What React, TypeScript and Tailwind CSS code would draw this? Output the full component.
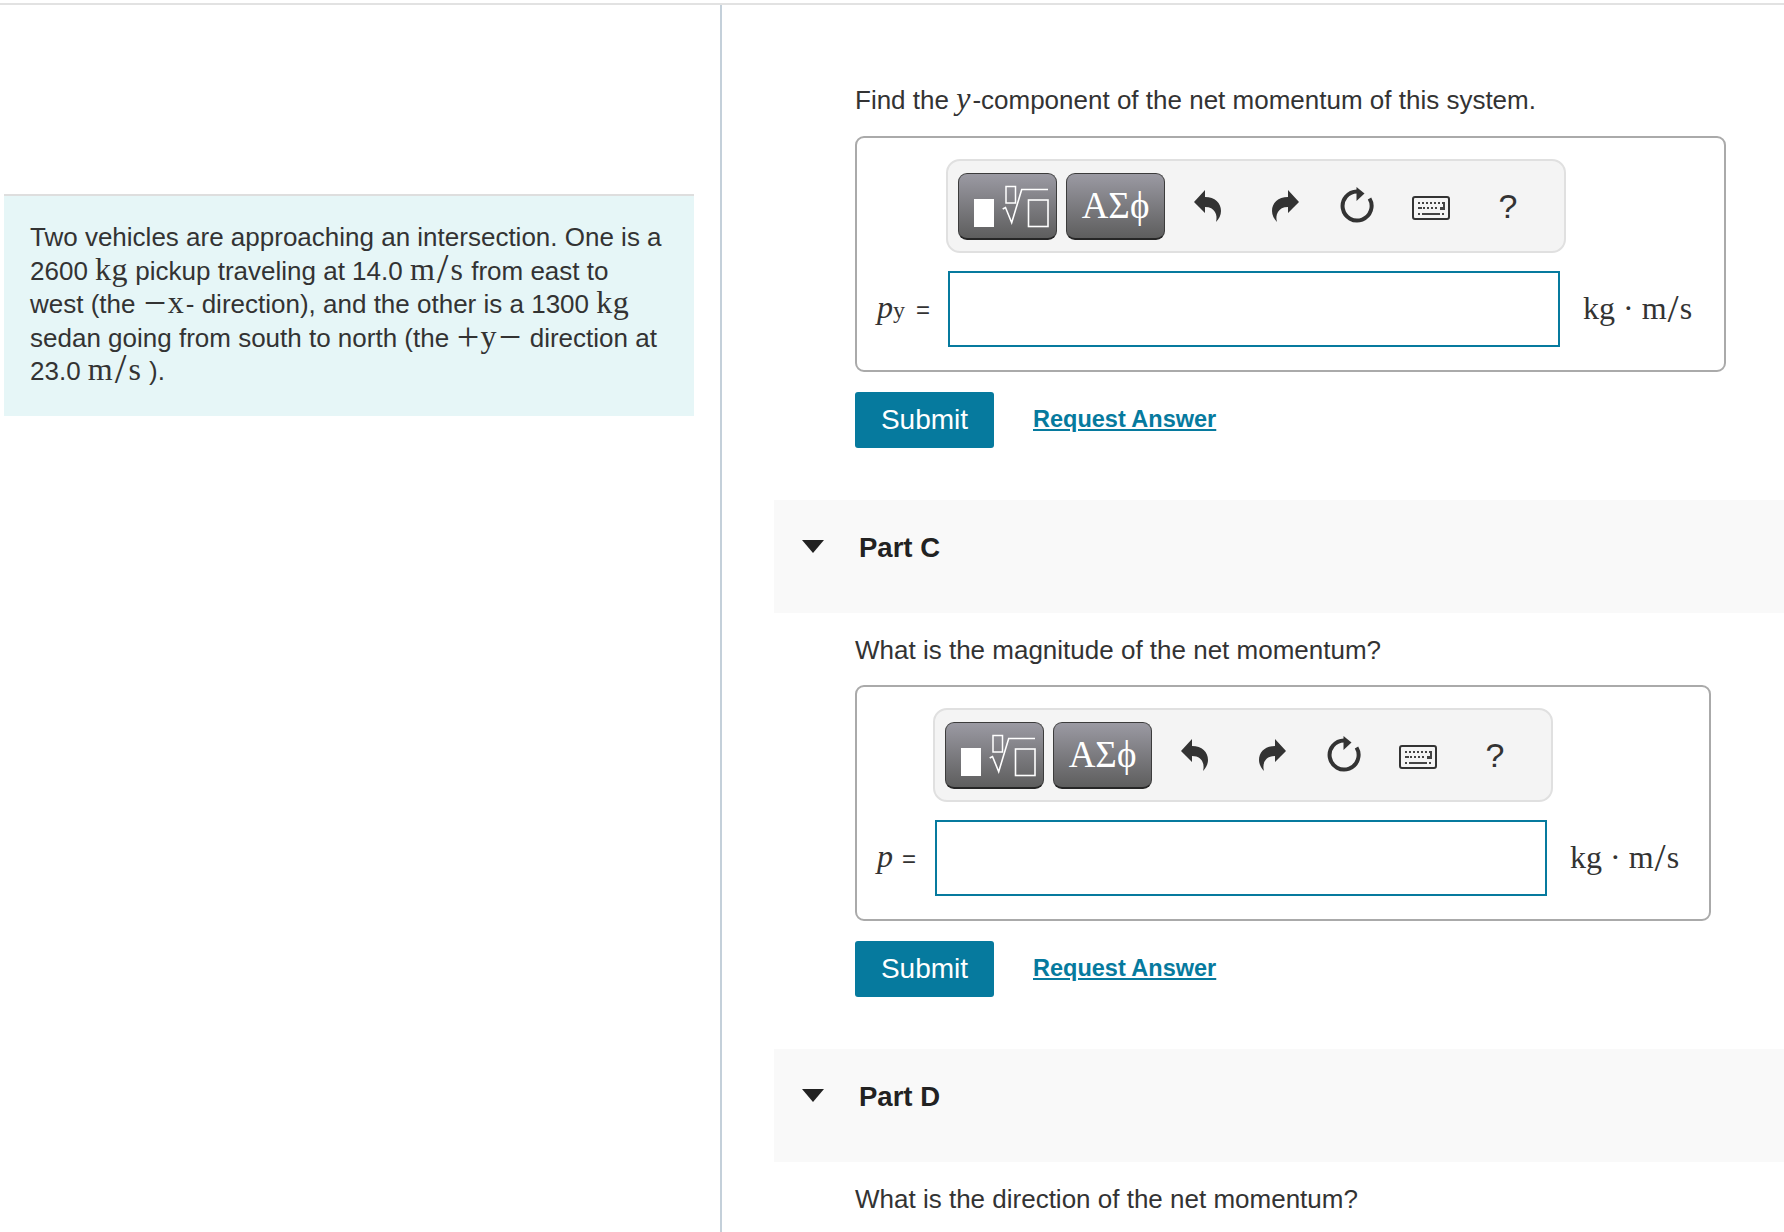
const serif = "font-['Liberation_Serif',serif]";

function Undo({ flip }: { flip?: boolean }) {
  return (
    <svg width="27" height="32" viewBox="0 0 27 32" className={flip ? "-scale-x-100" : ""}>
      <path d="M0 12 L11 0 V7 C21 7 27 13 27 21 C27 25 25 29 22 32 C24 25 21 17 11 17 V23 Z" fill="#333" />
    </svg>
  );
}

function Refresh() {
  return (
    <svg width="34" height="46" viewBox="0 0 34 46">
      <path d="M29.5 15.5 A14.5 14.5 0 1 1 17 8.5" fill="none" stroke="#333" strokeWidth="4" />
      <path d="M16.5 4 L24.5 10.5 L16.5 18 Z" fill="#333" />
    </svg>
  );
}

function Keyboard() {
  const top = [6, 10, 14, 18, 22, 26, 30];
  const mid = [6, 11, 15, 19, 23];
  return (
    <svg width="38" height="24" viewBox="0 0 38 24">
      <rect x="1" y="1" width="36" height="22" rx="2" fill="none" stroke="#333" strokeWidth="2" />
      {top.map((x) => (
        <rect key={x} x={x} y="6" width="2" height="2" fill="#444" />
      ))}
      {mid.map((x) => (
        <rect key={x} x={x} y="11" width={x === 6 ? 4 : 2} height="2" fill="#444" />
      ))}
      <path d="M28 11 H32 V14 H28 Z M31 6 H33 V14 H31 Z" fill="#444" />
      <rect x="6" y="17" width="2" height="2" fill="#444" />
      <rect x="10" y="17" width="18" height="2" fill="#444" />
      <rect x="30" y="17" width="2" height="2" fill="#444" />
    </svg>
  );
}

function TemplateIcon() {
  return (
    <svg width="99" height="67" viewBox="0 0 99 67" className="absolute left-[-1px] top-[-1px]">
      <rect x="16" y="26" width="20" height="28" fill="#fff" />
      <rect x="48" y="13.5" width="9.5" height="16.5" fill="none" stroke="#fff" strokeWidth="1.5" />
      <path d="M44.7 36 L47.5 34.5 L53.7 49.7 L63.7 16.5 H90" fill="none" stroke="#fff" strokeWidth="1.6" />
      <rect x="70.5" y="27" width="19.5" height="26.5" fill="none" stroke="#fff" strokeWidth="1.6" />
    </svg>
  );
}

const btn =
  "relative h-[67px] w-[99px] rounded-[9px] border border-[#3c3c3c] border-b-2 border-b-[#262626] bg-gradient-to-b from-[#9b9aa3] to-[#5e5e5e]";

function Toolbar({ offset }: { offset: string }) {
  return (
    <div className={`flex h-[94px] w-[620px] items-center rounded-[14px] border-2 border-[#e0e0e0] bg-[#f4f4f4] pl-[10px] ${offset}`}>
      <div className={btn}>
        <TemplateIcon />
      </div>
      <div className={`${btn} ml-[9px] flex items-center justify-center text-[37px] leading-none text-white ${serif}`}>ΑΣϕ</div>
      <div className="ml-[3px] flex w-[78px] justify-center"><Undo /></div>
      <div className="flex w-[78px] justify-center"><Undo flip /></div>
      <div className="flex w-[66px] justify-center"><Refresh /></div>
      <div className="flex w-[82px] justify-center pt-1"><Keyboard /></div>
      <div className="ml-[2px] flex w-[68px] justify-center text-[34px] leading-none text-[#333]">?</div>
    </div>
  );
}

function Slash({ size }: { size: string }) {
  return <span className={`mx-[1px] inline-block translate-y-[3px] font-light leading-[0] ${size}`}>/</span>;
}

function AnswerBox({ width, toolbar, labelW, label }: { width: string; toolbar: string; labelW: string; label: React.ReactNode }) {
  return (
    <div className={`h-[236px] rounded-[9px] border-2 border-[#aaaaaa] pt-[21px] ${width}`}>
      <Toolbar offset={toolbar} />
      <div className="mt-[18px] flex items-center">
        <div className={`mb-[5px] flex items-baseline pl-[20px] text-[#333] ${labelW}`}>{label}</div>
        <div className="h-[76px] w-[612px] border-2 border-[#067a9e] bg-white" />
        <div className={`mb-[3px] ml-[23px] text-[32px] leading-none text-[#333] ${serif}`}>
          kg · m<Slash size="text-[40px]" />s
        </div>
      </div>
    </div>
  );
}

function Actions() {
  return (
    <div className="flex items-center">
      <button className="h-[56px] w-[139px] rounded-[3px] bg-[#067a9e] text-[28px] text-white">Submit</button>
      <a className="ml-[39px] text-[23.5px] font-bold text-[#067a9e] underline">Request Answer</a>
    </div>
  );
}

function PartBand({ name }: { name: string }) {
  return (
    <div className="ml-[52px] flex h-[113px] items-start bg-[#f9f9f9] pt-[32px]">
      <svg width="22" height="13" viewBox="0 0 22 13" className="ml-[28px] mt-[8px]">
        <path d="M0 0 H22 L11 13 Z" fill="#222" />
      </svg>
      <div className="ml-[35px] text-[27.5px] font-bold leading-[32px] text-[#222]">{name}</div>
    </div>
  );
}

function M({ children }: { children: React.ReactNode }) {
  return <span className={`text-[32px] leading-[0] tracking-[0.5px] ${serif}`}>{children}</span>;
}

function MS() {
  return (
    <span className={`text-[32px] leading-[0] tracking-[1px] ${serif}`}>
      m<Slash size="text-[42px]" />s
    </span>
  );
}

function Line({ children }: { children: React.ReactNode }) {
  return <div className="h-[33.5px] whitespace-nowrap">{children}</div>;
}

function Sym({ children }: { children: React.ReactNode }) {
  return <span className="mx-[3px] inline-block scale-125 tracking-[0px]">{children}</span>;
}

export default function App() {
  return (
    <div className="h-[1232px] overflow-hidden bg-white font-['Liberation_Sans',sans-serif] text-[#333]">
      <div className="mt-[3px] h-[2px] bg-[#e2e2e2]" />
      <div className="flex h-[1227px]">
        <div className="w-[722px] shrink-0 border-r-2 border-[#c4d0da] pl-[4px] pr-[26px] pt-[189px]">
          <div className="h-[222px] border-t-2 border-[#dedede] bg-[#e6f6f7] pl-[26px] pt-[25px] text-[26px] leading-[33.5px]">
            <Line>Two vehicles are approaching an intersection. One is a</Line>
            <Line>
              2600 <M>kg</M> pickup traveling at 14.0 <MS /> from east to
            </Line>
            <Line>
              west (the <M><Sym>−</Sym><span className="ml-[1px] tracking-[2px]">x</span></M>- direction), and the other is a 1300 <M>kg</M>
            </Line>
            <Line>
              sedan going from south to north (the <M><Sym>+</Sym><span className="tracking-[2px]">y</span><Sym>−</Sym></M> direction at
            </Line>
            <Line>
              23.0 <MS /> ).
            </Line>
          </div>
        </div>
        <div className="min-w-0 flex-1">
          <div className="pl-[133px]">
            <p className="mt-[77px] text-[26px] leading-[30px]">
              Find the <span className={`mr-[2px] italic text-[32px] leading-none ${serif}`}>y</span>-component of the net momentum of this system.
            </p>
            <div className="mt-[21px]">
              <AnswerBox
                width="w-[871px]"
                toolbar="ml-[89px]"
                labelW="w-[91px]"
                label={
                  <>
                    <span className={`italic text-[32px] leading-none ${serif}`}>p</span>
                    <span className={`text-[24px] leading-none ${serif}`}>y</span>
                    <span className="ml-[11px] text-[24px] leading-none">=</span>
                  </>
                }
              />
            </div>
            <div className="mt-[20px]"><Actions /></div>
          </div>
          <div className="mt-[52px]"><PartBand name="Part C" /></div>
          <div className="pl-[133px]">
            <p className="mt-[22px] text-[26px] leading-[30px]">What is the magnitude of the net momentum?</p>
            <div className="mt-[20px]">
              <AnswerBox
                width="w-[856px]"
                toolbar="ml-[76px]"
                labelW="w-[78px]"
                label={
                  <>
                    <span className={`italic text-[32px] leading-none ${serif}`}>p</span>
                    <span className="ml-[9px] text-[24px] leading-none">=</span>
                  </>
                }
              />
            </div>
            <div className="mt-[20px]"><Actions /></div>
          </div>
          <div className="mt-[52px]"><PartBand name="Part D" /></div>
          <div className="pl-[133px]">
            <p className="mt-[22px] text-[26px] leading-[30px]">What is the direction of the net momentum?</p>
          </div>
        </div>
      </div>
    </div>
  );
}
